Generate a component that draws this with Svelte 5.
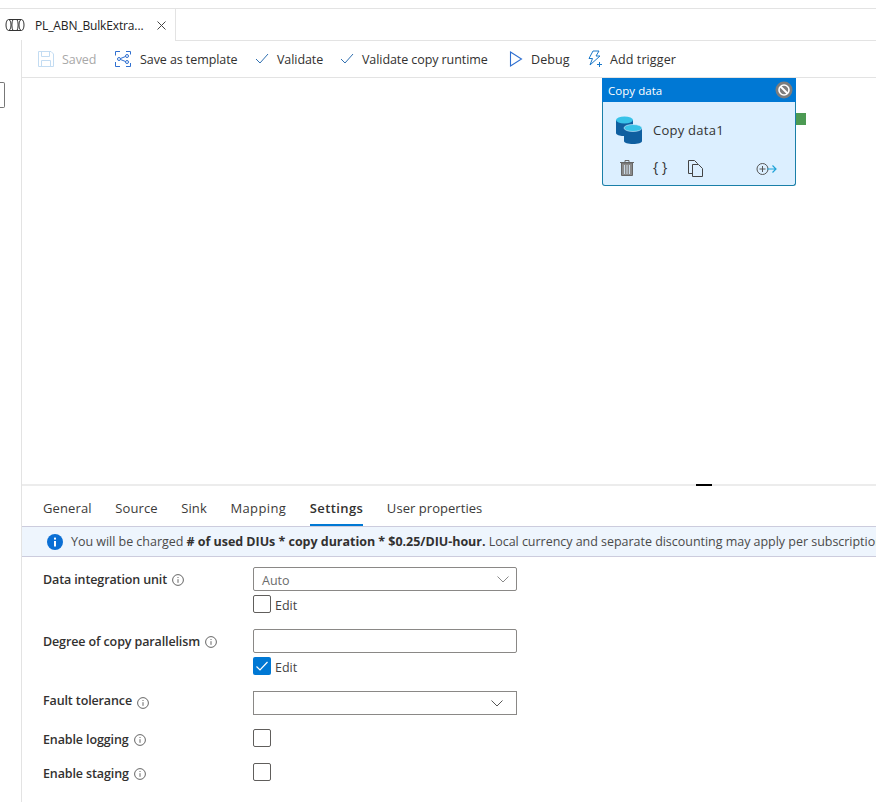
<script>
  const tabs = ['General', 'Source', 'Sink', 'Mapping', 'Settings', 'User properties'];
</script>

<div class="page">
  <div class="tabbar">
    <div class="doc-tab">
      <svg class="pipe" width="20" height="14" viewBox="0 0 20 14" fill="none" stroke="#333" stroke-width="1">
        <path d="M4 1.500h12M4 12.500h12" />
        <ellipse cx="3.500" cy="7" rx="2.500" ry="5.500" />
        <path d="M8 1.500c-1.500 2-1.500 9 0 11M12 1.500c1.500 2 1.500 9 0 11" />
        <ellipse cx="16.500" cy="7" rx="2.500" ry="5.500" />
      </svg>
      <span class="doc-name">PL_ABN_BulkExtra...</span>
      <svg class="close" width="9" height="9" viewBox="0 0 9 9" stroke="#444" stroke-width="1"><path d="M.5.500l8 8M8.500.500l-8 8" /></svg>
    </div>
    <div class="tab-rest"></div>
  </div>

  <div class="main">
    <aside class="rail"><div class="rail-box"></div></aside>
    <div class="work">
      <div class="toolbar">
        <div class="tool disabled s1">
          <svg width="16" height="16" viewBox="0 0 16 16" fill="none" stroke="#c3dcf2" stroke-width="1"><path d="M.5.500h12.500l2.500 2.500v12.500H.5z" /><path d="M3.500.5v5h8v-5M3.500 15.500v-6h9v6" /></svg>
          <span>Saved</span>
        </div>
        <div class="tool s2">
          <svg width="16" height="16" viewBox="0 0 16 16" fill="none" stroke="#2f6fd0" stroke-width="1"><path d="M5 .5H.5v4M11 .5h4.500v3M.5 11v4.500H5M15.500 12v3.500H11" /><circle cx="4" cy="8" r="1.500" /><circle cx="12" cy="5" r="1.500" /><circle cx="12" cy="11" r="1.500" /><path d="M5.500 7.500l5-2M5.500 8.500l5 2" /></svg>
          <span>Save as template</span>
        </div>
        <div class="tool s3">
          <svg width="14" height="16" viewBox="0 0 14 16" fill="none" stroke="#2f6fb0" stroke-width="1"><path d="M1 8l4 4 8-9" /></svg>
          <span>Validate</span>
        </div>
        <div class="tool s4">
          <svg width="14" height="16" viewBox="0 0 14 16" fill="none" stroke="#2f6fb0" stroke-width="1"><path d="M1 8l4 4 8-9" /></svg>
          <span>Validate copy runtime</span>
        </div>
        <div class="tool s5">
          <svg width="14" height="16" viewBox="0 0 14 16" fill="none" stroke="#2f6fd0" stroke-width="1.100"><path d="M1.500 1l11 7-11 7z" /></svg>
          <span>Debug</span>
        </div>
        <div class="tool s6">
          <svg width="16" height="18" viewBox="0 0 16 18" fill="none" stroke="#1a78c8" stroke-width="1"><path d="M6 1h6L9 6h4L3 15l2.500-6.500H2z" /><path d="M12.500 12v5M10 14.500h5" /></svg>
          <span>Add trigger</span>
        </div>
      </div>

      <div class="canvas">
        <div class="node">
          <div class="node-head">
            <span>Copy data</span>
            <svg width="18" height="18" viewBox="0 0 18 18"><circle cx="9" cy="9" r="8.500" fill="#7d7d7d" /><circle cx="9" cy="9" r="5" fill="none" stroke="#fff" stroke-width="1.600" /><path d="M5.500 5.500l7 7" stroke="#fff" stroke-width="2" /></svg>
          </div>
          <div class="node-body">
            <svg width="26" height="28" viewBox="0 0 26 28">
              <path d="M0 4v13c0 2 4 3 7 3h10V4z" fill="#0f5fa0" />
              <ellipse cx="8.500" cy="4" rx="8.500" ry="3.500" fill="#37c2e8" />
              <path d="M8 12v13c0 2 4 3 9 3s9-1 9-3V12z" fill="#0f5fa0" />
              <ellipse cx="17" cy="12" rx="9" ry="3.500" fill="#37c2e8" stroke="#dcefff" stroke-width=".6" />
            </svg>
            <span>Copy data1</span>
          </div>
          <div class="node-actions">
            <svg class="a1" width="14" height="16" viewBox="0 0 14 16" fill="none" stroke="#666"><path d="M0 2.500h14M5 2.500V.5h4v2" /><path d="M1.500 3h11v12.500h-11z" fill="#8a8a8a" /><path d="M4.500 5v9M7 5v9M9.500 5v9" stroke="#dcefff" stroke-width=".8" /></svg>
            <span class="braces">&#123; &#125;</span>
            <svg class="a3" width="15" height="17" viewBox="0 0 15 17" fill="none" stroke="#444"><path d="M4.500 13.500H.5V.5h6l3 3v1" /><path d="M4.500 4.500h6l4 4v8h-10z" /></svg>
            <svg class="a4" width="21" height="12" viewBox="0 0 21 12" fill="none"><circle cx="6.500" cy="6" r="5.500" stroke="#555" /><path d="M3.500 6h6M6.500 3v6" stroke="#555" /><path d="M11 6h9M16.500 2.500L20 6l-3.500 3.500" stroke="#1fa3d8" stroke-width="1.200" /></svg>
          </div>
          <div class="handle"></div>
        </div>
      </div>

      <div class="splitter"><div class="grip"></div></div>

      <nav class="tabs">
        {#each tabs as t}
          <div class="tab" class:active={t === 'Settings'}>{t}</div>
        {/each}
      </nav>

      <div class="banner">
        <svg width="16" height="16" viewBox="0 0 16 16"><circle cx="8" cy="8" r="8" fill="#0b6fd4" /><rect x="7" y="7" width="2" height="5.500" fill="#fff" /><rect x="7" y="3.600" width="2" height="2" fill="#fff" /></svg>
        <span class="banner-text">You will be charged <b># of used DIUs * copy duration * $0.25/DIU-hour.</b> Local currency and separate discounting may apply per subscription</span>
      </div>

      <div class="form">
        <div class="row r1">
          <div class="label l12">Data integration unit {@render info()}</div>
          <div class="ctl">
            <div class="input rounded select"><span class="auto">Auto</span>{@render chevron('#8a8a8a')}</div>
            <label class="check"><span class="box"></span><span class="edit">Edit</span></label>
          </div>
        </div>
        <div class="row r2">
          <div class="label l12">Degree of copy parallelism {@render info()}</div>
          <div class="ctl">
            <div class="input rounded"></div>
            <label class="check">
              <span class="box on"><svg width="18" height="18" viewBox="0 0 18 18" fill="none" stroke="#fff" stroke-width="1.200"><path d="M3.500 9.500l3.500 3.500 7.500-8" /></svg></span><span class="edit">Edit</span>
            </label>
          </div>
        </div>
        <div class="row r3">
          <div class="label l9">Fault tolerance {@render info()}</div>
          <div class="ctl"><div class="input select fault"><span></span>{@render chevron('#555')}</div></div>
        </div>
        <div class="row r4">
          <div class="label l10">Enable logging {@render info()}</div>
          <div class="ctl"><span class="box"></span></div>
        </div>
        <div class="row r5">
          <div class="label l10">Enable staging {@render info()}</div>
          <div class="ctl"><span class="box"></span></div>
        </div>
      </div>
    </div>
  </div>
</div>

{#snippet info()}
  <svg class="info" width="12" height="12" viewBox="0 0 12 12" fill="none" stroke="#555" stroke-width=".9"><circle cx="6" cy="6" r="5.400" /><path d="M6 5.200v3.600M6 3v1" /></svg>
{/snippet}

{#snippet chevron(color)}
  <svg class="chev" width="12" height="7" viewBox="0 0 12 7" fill="none" stroke={color}><path d="M.5.500L6 6l5.500-5.500" /></svg>
{/snippet}

<style>
  :global(body) { margin: 0; background: #fff; }
  .page {
    width: 876px;
    height: 802px;
    overflow: hidden;
    font-family: "Open Sans", "Noto Sans", sans-serif;
    font-size: 12.500px;
    color: #323130;
    padding-top: 8px;
    box-sizing: border-box;
    display: flex;
    flex-direction: column;
  }
  .tabbar { display: flex; height: 33px; border-top: 1px solid #e3e3e3; flex: none; box-sizing: border-box; }
  .doc-tab { width: 175px; flex: none; display: flex; align-items: center; border-right: 1px solid #e3e3e3; box-sizing: content-box; }
  .pipe { margin-left: 5px; }
  .doc-name { margin-left: 10px; font-size: 12px; color: #222; width: 111px; white-space: nowrap; letter-spacing: -.14px; }
  .close { margin-left: 11px; }
  .tab-rest { flex: 1; border-bottom: 1px solid #e3e3e3; }

  .main { flex: 1; display: flex; min-height: 0; margin-top: -1px; }
  .rail { width: 21px; flex: none; border-right: 1px solid #e3e3e3; padding-top: 42px; }
  .rail-box { width: 4px; height: 24px; border: 1px solid #777; border-left: 0; border-radius: 0 2px 2px 0; }
  .work { flex: 1; min-width: 0; display: flex; flex-direction: column; }

  .toolbar { flex: none; display: flex; align-items: center; border-bottom: 1px solid #e3e3e3; box-sizing: content-box; padding-top: 1px; height: 36px; }
  .tool { display: flex; align-items: center; flex: none; white-space: nowrap; letter-spacing: -.08px; }
  .tool.disabled { color: #a8a8a8; }
  .s1 { margin-left: 16px; width: 77px; gap: 8px; }
  .s2 { width: 140px; gap: 9px; }
  .s3 { width: 85px; gap: 8px; }
  .s4 { width: 169px; gap: 8px; }
  .s5 { width: 78px; gap: 8px; letter-spacing: .1px; }
  .s6 { gap: 7px; letter-spacing: .1px; }

  .canvas { flex: none; height: 406px; position: relative; }
  .node {
    position: absolute;
    left: 580px;
    top: 0;
    width: 194px;
    height: 108px;
    box-sizing: border-box;
    background: #dcefff;
    border: 1px solid #1a7fa8;
    border-top: 0;
    border-radius: 0 0 3px 3px;
    display: flex;
    flex-direction: column;
  }
  .node-head { height: 24px; background: #0078d4; color: #fff; display: flex; align-items: center; justify-content: space-between; padding: 0 3px 0 6px; font-size: 11.500px; letter-spacing: .05px; margin: 0 -1px; line-height: 23px; }
  .node-body { display: flex; align-items: center; gap: 11px; padding: 14px 0 0 13px; height: 28px; color: #333; font-size: 13px; letter-spacing: .25px; }
  .node-actions { position: relative; flex: 1; }
  .node-actions > * { position: absolute; }
  .a1 { left: 17px; top: 16px; }
  .braces { left: 50px; top: 13px; font-size: 14px; color: #333; }
  .a3 { left: 85px; top: 16px; }
  .a4 { left: 153px; top: 19px; }
  .handle { position: absolute; right: -11px; top: 35px; width: 10px; height: 12px; background: #4c9a53; }

  .splitter { height: 2px; background: #ececec; flex: none; position: relative; }
  .grip { position: absolute; left: 674px; top: 0; width: 16px; height: 2px; background: #000; }

  .tabs { height: 40px; flex: none; display: flex; gap: 23.500px; padding-left: 21px; box-sizing: border-box; }
  .tab { height: 40px; box-sizing: border-box; line-height: 44px; font-size: 13px; letter-spacing: .12px; color: #3b3a39; }
  .tab:nth-child(4) { letter-spacing: .4px; }
  .tab:nth-child(6) { letter-spacing: .05px; }
  .tab.active { font-weight: 600; border-bottom: 2px solid #0078d4; color: #323130; letter-spacing: .4px; }

  .banner { height: 31px; flex: none; box-sizing: border-box; background: #eef5fd; border-top: 1px solid #ccd; border-bottom: 1px solid #ccd; display: flex; align-items: center; padding-left: 25px; gap: 8px; white-space: nowrap; overflow: hidden; letter-spacing: -.03px; }
  .banner > svg { flex: none; }
  .banner-text { color: #4a4a4a; }
  .banner b { font-weight: 700; color: #323130; }

  .form { flex: none; height: 245px; box-sizing: border-box; padding: 10px 0 0 21px; }
  .row { display: flex; }
  .r2, .r3 { margin-top: 16px; }
  .r4 { margin-top: 14px; }
  .r5 { margin-top: 15px; }
  .label { width: 210px; flex: none; font-weight: 600; font-size: 12.500px; letter-spacing: -.12px; line-height: 16px; color: #323130; display: flex; align-items: center; gap: 5px; height: 16px; white-space: nowrap; }
  .l12 { margin-top: 5px; }
  .l9 { margin-top: 2px; }
  .l9 .info { margin-top: 3px; }
  .l10 { margin-top: 3px; }
  .ctl { width: 264px; }
  .input { height: 24px; box-sizing: border-box; border: 1px solid #8a8886; display: flex; align-items: center; justify-content: space-between; }
  .rounded { border-radius: 2px; }
  .auto { margin: 2px 0 0 8px; color: #6b6b6b; letter-spacing: 0; }
  .select .chev { margin-right: 7px; }
  .fault .chev { margin-right: 13px; }
  .check { display: flex; align-items: center; gap: 4px; margin-top: 4px; height: 18px; color: #444; letter-spacing: 0; font-size: 12.500px; }
  .edit { margin-top: 2px; }
  .box { display: block; width: 18px; height: 18px; box-sizing: border-box; border: 1px solid #605e5c; border-radius: 2px; flex: none; }
  .box.on { background: #0078d4; border: 0; }
  .box.on svg { display: block; }
  .info { flex: none; }
</style>
